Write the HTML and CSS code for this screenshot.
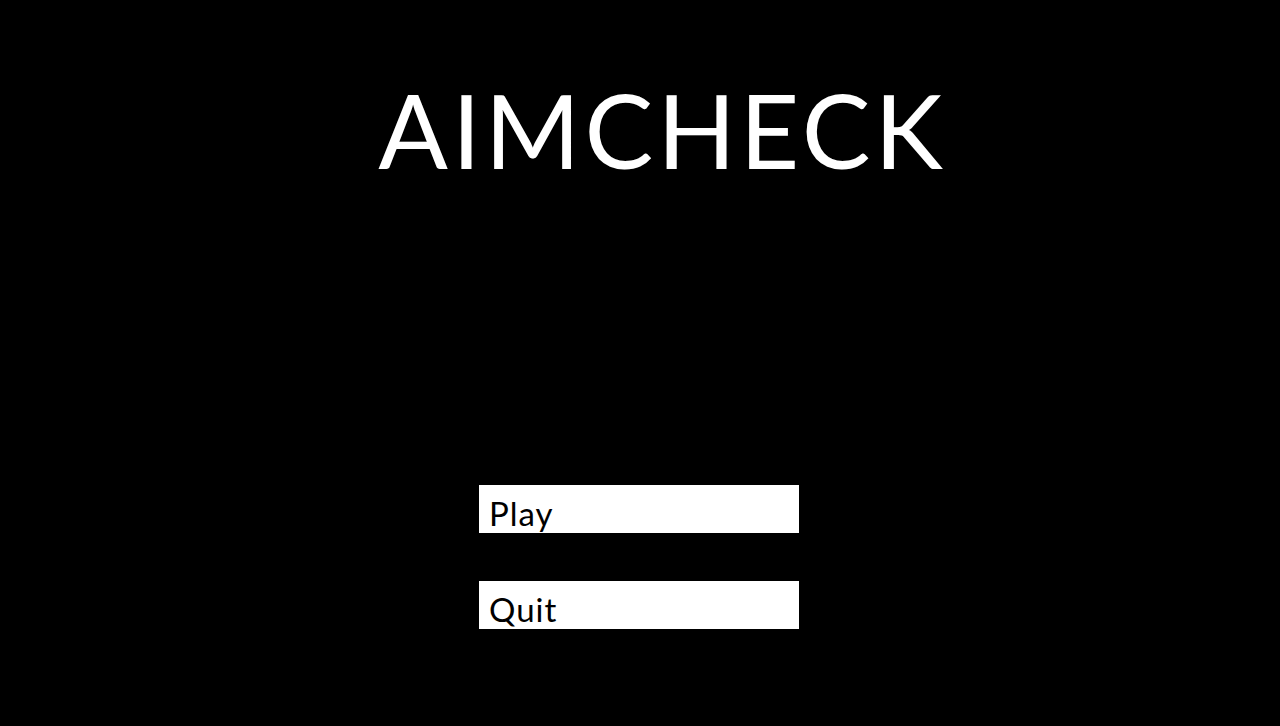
FILE: index.html
```html
<!DOCTYPE html>
<html>
<head>
<meta charset="utf-8">
<link rel="stylesheet" href="styles.css">
</head>
<body>
<main class="menu">
  <h1 class="title">AIMCHECK</h1>
  <div class="buttons">
    <button class="btn">Play</button>
    <button class="btn">Quit</button>
  </div>
</main>
</body>
</html>
```
FILE: styles.css
```css
html, body {
  margin: 0;
  padding: 0;
  background: #000;
  height: 100%;
}
.menu {
  display: flex;
  flex-direction: column;
  align-items: center;
  height: 726px;
  overflow: hidden;
}
.title {
  margin: 69px 0 0 45px;
  color: #fff;
  font-family: "Lato", sans-serif;
  font-weight: 400;
  font-size: 103px;
  line-height: 120px;
  letter-spacing: 4px;
}
.buttons {
  margin: 296px 2px 0 0;
  display: flex;
  flex-direction: column;
  gap: 48px;
}
.btn {
  width: 320px;
  height: 48px;
  background: #fff;
  border: none;
  padding: 8px 10px 0;
  margin: 0;
  text-align: left;
  font-family: "Lato", sans-serif;
  font-weight: 400;
  font-size: 33px;
  letter-spacing: 1px;
  line-height: 40px;
  color: #000;
  overflow: hidden;
  display: block;
}
```
